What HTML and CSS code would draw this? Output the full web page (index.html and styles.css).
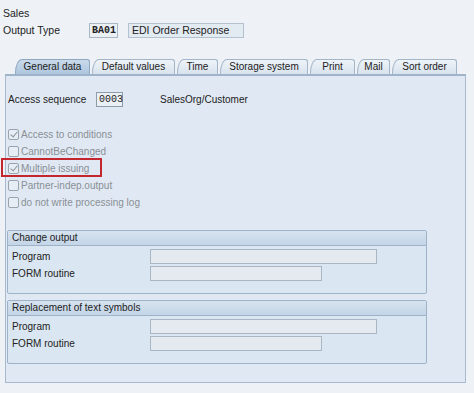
FILE: index.html
```html
<!DOCTYPE html>
<html lang="en">
<head>
    <meta charset="UTF-8">
    <title>Output Type BA01</title>
    <link rel="stylesheet" href="styles.css">
</head>
<body>
    <div class="screen">
        <div class="title">Sales</div>
        <div class="head-row">
            <span class="head-label">Output Type</span>
            <span class="field code">BA01</span>
            <span class="field desc">EDI Order Response</span>
        </div>

        <div class="tabs">
            <div class="tab active t1">General data</div>
            <div class="tab t2">Default values</div>
            <div class="tab t3">Time</div>
            <div class="tab t4">Storage system</div>
            <div class="tab t5">Print</div>
            <div class="tab t6">Mail</div>
            <div class="tab t7">Sort order</div>
        </div>

        <div class="panel">
            <div class="access-row">
                <span class="access-label">Access sequence</span>
                <span class="field seq">0003</span>
                <span class="access-text">SalesOrg/Customer</span>
            </div>

            <div class="checks">
                <div class="check-row"><span class="box checked"></span>Access to conditions</div>
                <div class="check-row"><span class="box"></span>CannotBeChanged</div>
                <div class="check-row marked"><span class="box checked"></span>Multiple issuing<span class="highlight"></span></div>
                <div class="check-row"><span class="box"></span>Partner-indep.output</div>
                <div class="check-row"><span class="box"></span>do not write processing log</div>
            </div>

            <div class="group">
                <div class="group-head">Change output</div>
                <div class="group-body">
                    <div class="group-row"><span class="row-label">Program</span><span class="field long"></span></div>
                    <div class="group-row"><span class="row-label">FORM routine</span><span class="field short"></span></div>
                </div>
            </div>

            <div class="group">
                <div class="group-head">Replacement of text symbols</div>
                <div class="group-body">
                    <div class="group-row"><span class="row-label">Program</span><span class="field long"></span></div>
                    <div class="group-row"><span class="row-label">FORM routine</span><span class="field short"></span></div>
                </div>
            </div>
        </div>
    </div>
</body>
</html>
```

FILE: styles.css
```css
html, body {
    margin: 0;
    padding: 0;
}
body {
    background: #eef2f7;
    font-family: "Liberation Sans", Arial, sans-serif;
    font-size: 10px;
    color: #222;
}
.screen {
    width: 474px;
    height: 393px;
    overflow: hidden;
}
.title {
    height: 14px;
    line-height: 14px;
    padding: 6px 0 0 3px;
    font-size: 10.5px;
}
.head-row {
    display: flex;
    align-items: center;
    height: 16px;
    margin-top: 2px;
    padding-left: 3px;
    font-size: 10.5px;
}
.head-label {
    width: 86px;
}
.field {
    display: inline-block;
    box-sizing: border-box;
    height: 15px;
    line-height: 13px;
    border: 1px solid #a9b6c3;
    background: #ebf0f5;
    padding: 0 3px;
}
.code {
    width: 29px;
    font-family: "Liberation Mono", "Courier New", monospace;
    font-weight: bold;
    font-size: 10px;
    padding: 0 2px;
}
.desc {
    width: 116px;
    margin-left: 10px;
    background: #e2eaf2;
    border-color: #b4c1ce;
}

/* tab strip */
.tabs {
    display: flex;
    gap: 2px;
    margin-top: 21px;
    padding-left: 15px;
    height: 15px;
}
.tab {
    box-sizing: border-box;
    height: 15px;
    line-height: 14px;
    text-align: center;
    border: 1px solid #a3b6c9;
    border-bottom: none;
    border-radius: 7px 3px 0 0 / 14px 3px 0 0;
    background: linear-gradient(to bottom, #eef3f8, #d8e3ee);
    color: #222;
}
.tab.active {
    background: linear-gradient(to bottom, #c9daea, #aec6de);
    border-color: #8fa8c1;
}
.t1 { width: 75px; }
.t2 { width: 83px; }
.t3 { width: 41px; }
.t4 { width: 88px; }
.t5 { width: 45px; }
.t6 { width: 33px; }
.t7 { width: 65px; }

/* tab panel */
.panel {
    box-sizing: border-box;
    width: 461px;
    height: 309px;
    margin-left: 5px;
    border: 1px solid #a7b9cc;
    border-top: 2px solid #9fb4ca;
    background: #e0e9f3;
    padding: 16px 0 0 1px;
}
.access-row {
    display: flex;
    align-items: center;
    height: 15px;
}
.access-label {
    width: 88px;
    padding-left: 1px;
}
.seq {
    width: 27px;
    font-family: "Liberation Mono", "Courier New", monospace;
    font-size: 10px;
    padding: 0 2px;
    border-color: #8e9caa;
}
.access-text {
    margin-left: 37px;
}

.checks {
    margin-top: 19px;
}
.check-row {
    position: relative;
    display: flex;
    align-items: center;
    height: 17px;
    color: #8a8f96;
    padding-left: 1px;
}
.box {
    box-sizing: border-box;
    width: 11px;
    height: 11px;
    border: 1px solid #9aa4ae;
    border-radius: 2px;
    background: #e6edf4;
    margin: 0 2px 0 0;
    position: relative;
}
.box.checked::after {
    content: "";
    position: absolute;
    left: 3px;
    top: 0px;
    width: 3px;
    height: 6px;
    border: solid #8c949c;
    border-width: 0 1.5px 1.5px 0;
    transform: rotate(40deg);
}
.highlight {
    position: absolute;
    left: -6px;
    top: -2px;
    width: 101px;
    height: 19px;
    box-sizing: border-box;
    border: 2px solid #c4262e;
}

/* groups */
.group {
    width: 420px;
    box-sizing: border-box;
    border: 1px solid #9fb3c8;
    border-radius: 2px;
    background: #dae6f1;
    margin-top: 6px;
    height: 64px;
}
.checks + .group {
    margin-top: 19px;
}
.group-head {
    height: 14px;
    line-height: 14px;
    padding-left: 4px;
    background: linear-gradient(to bottom, #d7e3ef, #c3d5e7);
    border-bottom: 1px solid #9fb3c8;
}
.group-body {
    padding: 2px 0 0 4px;
}
.group-row {
    display: flex;
    align-items: center;
    height: 17px;
}
.row-label {
    width: 138px;
}
.long {
    width: 227px;
    background: #e4eaef;
}
.short {
    width: 172px;
    background: #e4eaef;
}
```
